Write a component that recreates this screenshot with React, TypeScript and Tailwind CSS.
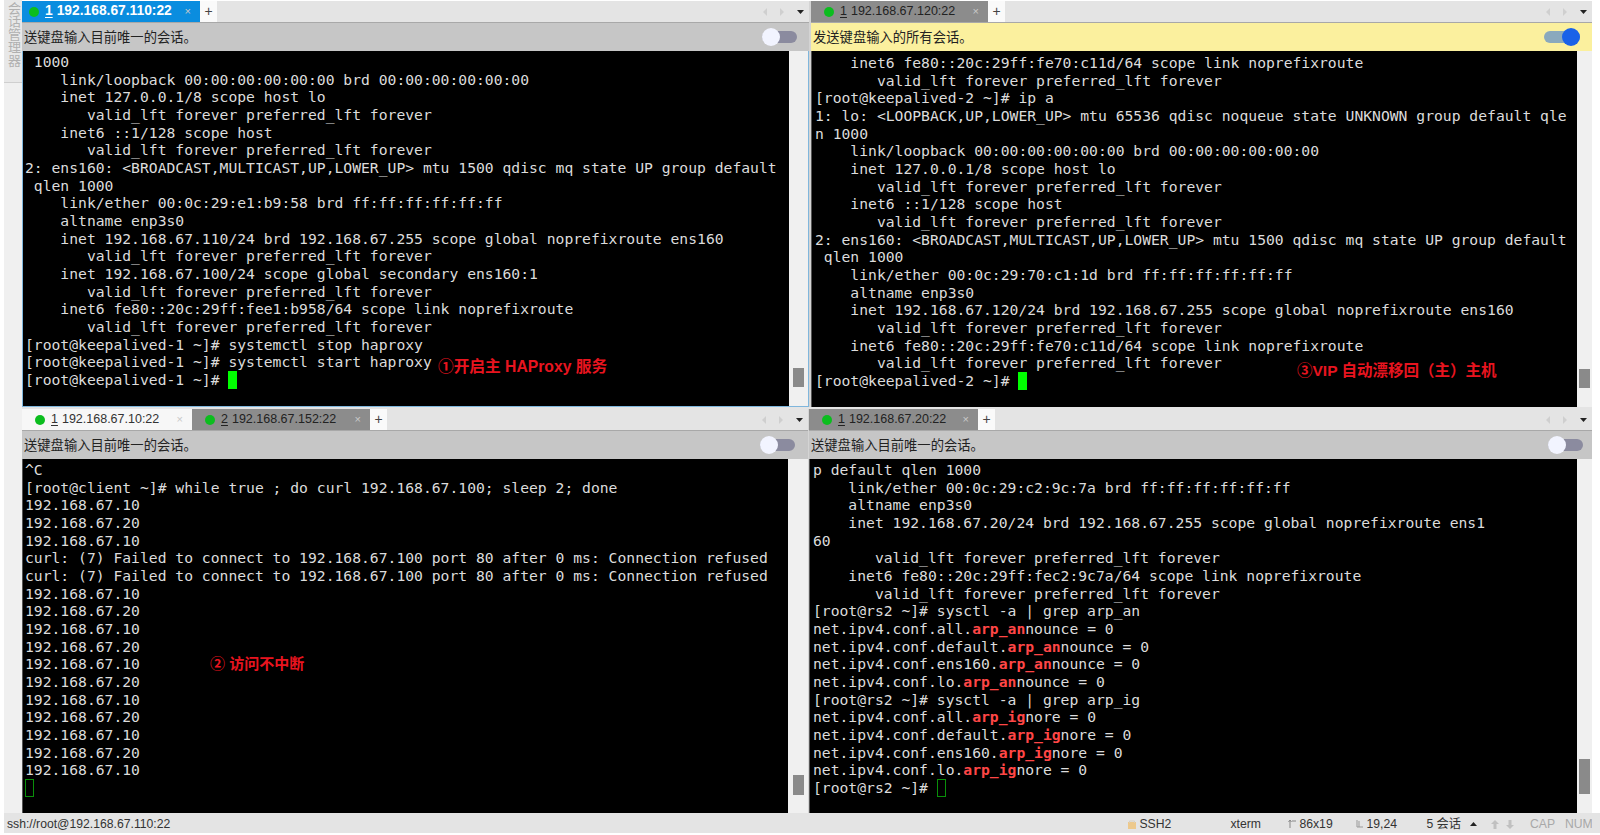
import React from "react";

const MONO = "[font-family:'DejaVu_Sans_Mono','Noto_Sans_CJK_SC',monospace]";
const SANS = "[font-family:'Liberation_Sans','Noto_Sans_CJK_SC',sans-serif]";

type Tab = { n?: string; host: string; kind: "blue" | "white" | "gray"; w: string };

function TabItem({ t }: { t: Tab }) {
  const bg =
    t.kind === "blue"
      ? "bg-[#0a8ddf] text-white font-bold text-[13.8px] pl-[7px]"
      : t.kind === "white"
        ? "bg-[#f7f7f7] text-[#333] text-[12.5px] pl-[13px]"
        : "bg-[#8c8c8c] text-[#222] text-[12.5px] pl-[13px]";
  const x = t.kind === "white" ? "text-[#c8c8c8]" : "text-[#c9c9c9]";
  return (
    <div className={`flex h-full shrink-0 items-center pr-[9px] ${bg} ${t.w}`}>
      <span className="h-[10px] w-[10px] shrink-0 rounded-full bg-[#0bbd1e]" />
      <span className="ml-[6px] underline underline-offset-2">{t.n ?? "1"}</span>
      <span className="ml-[4px]">{t.host}</span>
      <span className={`ml-auto text-[11px] font-normal ${x}`}>×</span>
    </div>
  );
}

function Toggle({ on }: { on?: boolean }) {
  return on ? (
    <div className="relative h-[12px] w-[36px] rounded-full bg-[#8aa9bd]">
      <div className="absolute right-0 top-[-3px] h-[18px] w-[18px] rounded-full bg-[#1a62e8]" />
    </div>
  ) : (
    <div className="relative h-[12px] w-[35px] rounded-full bg-[#8b8b9f]">
      <div className="absolute left-0 top-[-3px] h-[18px] w-[18px] rounded-full bg-[#f2f4ff]" />
    </div>
  );
}

function Line({ text }: { text: string }) {
  const parts = text.split(/(\{[^}]*\}|§|¤)/);
  return (
    <div className="h-[17.67px]">
      {parts.map((p, i) => {
        if (p === "§")
          return <span key={i} className="inline-block h-[18px] w-[9px] bg-[#00ff00] align-top" />;
        if (p === "¤")
          return (
            <span key={i} className="inline-block h-[18px] w-[9px] border border-[#0a8f0a] align-top" />
          );
        if (p.startsWith("{"))
          return (
            <span key={i} className="font-bold text-[#ff4646]">
              {p.slice(1, -1)}
            </span>
          );
        return <span key={i}>{p}</span>;
      })}
    </div>
  );
}

function Pane(props: {
  tabs: Tab[];
  notice: string;
  yellow?: boolean;
  on?: boolean;
  lines: string[];
  pad: string;
  noticePad: string;
  width: string;
  focused?: boolean;
  thumb: string;
  barW: string;
  children?: React.ReactNode;
}) {
  return (
    <div className={`relative flex h-full shrink-0 flex-col ${props.width}`}>
      <div className="flex h-[21px] shrink-0 items-center bg-[#e4e4e4]">
        {props.tabs.map((t) => (
          <TabItem key={t.host} t={t} />
        ))}
        <div className="flex h-full w-[17px] shrink-0 items-center justify-center bg-[#fafafa] text-[14px] text-[#444]">
          +
        </div>
        <div className="ml-auto flex items-center pr-[5px] text-[#c4c4c4]">
          <svg width="24" height="10" viewBox="0 0 24 10" className="mr-[11px]">
            <path d="M5 1 L1 5 L5 9 Z M18 1 L22 5 L18 9 Z" fill="#cfcfcf" />
          </svg>
          <svg width="7" height="4" viewBox="0 0 7 4">
            <path d="M0 0 H7 L3.5 4 Z" fill="#222" />
          </svg>
        </div>
      </div>
      <div
        className={`flex h-[29px] shrink-0 items-center justify-between border-t border-[#a8a8a8] pl-[2px] text-[13.3px] text-[#222] ${props.noticePad} ${props.yellow ? "bg-[#fbf09e]" : "bg-[#c6c6c6]"} ${SANS}`}
      >
        <span className="pt-[2px]">{props.notice}</span>
        <Toggle on={props.on} />
      </div>
      <div
        className={`flex min-h-0 flex-1 ${props.focused ? "border-x border-b border-[#7fb6dc]" : "border-l border-[#555]"}`}
      >
        <div
          className={`min-w-0 flex-1 overflow-hidden whitespace-pre bg-black text-[14.7px] leading-[17.67px] text-[#dcdcdc] ${props.pad} ${MONO}`}
        >
          {props.lines.map((l, i) => (
            <Line key={i} text={l} />
          ))}
        </div>
        <div className={`flex shrink-0 flex-col items-center justify-end bg-[#f0f0f0] ${props.barW}`}>
          <div className={`w-[11px] bg-[#8a8a8a] ${props.thumb}`} />
        </div>
      </div>
      {props.children}
    </div>
  );
}

const tl = [
  " 1000",
  "    link/loopback 00:00:00:00:00:00 brd 00:00:00:00:00:00",
  "    inet 127.0.0.1/8 scope host lo",
  "       valid_lft forever preferred_lft forever",
  "    inet6 ::1/128 scope host",
  "       valid_lft forever preferred_lft forever",
  "2: ens160: <BROADCAST,MULTICAST,UP,LOWER_UP> mtu 1500 qdisc mq state UP group default",
  " qlen 1000",
  "    link/ether 00:0c:29:e1:b9:58 brd ff:ff:ff:ff:ff:ff",
  "    altname enp3s0",
  "    inet 192.168.67.110/24 brd 192.168.67.255 scope global noprefixroute ens160",
  "       valid_lft forever preferred_lft forever",
  "    inet 192.168.67.100/24 scope global secondary ens160:1",
  "       valid_lft forever preferred_lft forever",
  "    inet6 fe80::20c:29ff:fee1:b958/64 scope link noprefixroute",
  "       valid_lft forever preferred_lft forever",
  "[root@keepalived-1 ~]# systemctl stop haproxy",
  "[root@keepalived-1 ~]# systemctl start haproxy",
  "[root@keepalived-1 ~]# §",
];

const tr = [
  "    inet6 fe80::20c:29ff:fe70:c11d/64 scope link noprefixroute",
  "       valid_lft forever preferred_lft forever",
  "[root@keepalived-2 ~]# ip a",
  "1: lo: <LOOPBACK,UP,LOWER_UP> mtu 65536 qdisc noqueue state UNKNOWN group default qle",
  "n 1000",
  "    link/loopback 00:00:00:00:00:00 brd 00:00:00:00:00:00",
  "    inet 127.0.0.1/8 scope host lo",
  "       valid_lft forever preferred_lft forever",
  "    inet6 ::1/128 scope host",
  "       valid_lft forever preferred_lft forever",
  "2: ens160: <BROADCAST,MULTICAST,UP,LOWER_UP> mtu 1500 qdisc mq state UP group default",
  " qlen 1000",
  "    link/ether 00:0c:29:70:c1:1d brd ff:ff:ff:ff:ff:ff",
  "    altname enp3s0",
  "    inet 192.168.67.120/24 brd 192.168.67.255 scope global noprefixroute ens160",
  "       valid_lft forever preferred_lft forever",
  "    inet6 fe80::20c:29ff:fe70:c11d/64 scope link noprefixroute",
  "       valid_lft forever preferred_lft forever",
  "[root@keepalived-2 ~]# §",
];

const bl = [
  "^C",
  "[root@client ~]# while true ; do curl 192.168.67.100; sleep 2; done",
  "192.168.67.10",
  "192.168.67.20",
  "192.168.67.10",
  "curl: (7) Failed to connect to 192.168.67.100 port 80 after 0 ms: Connection refused",
  "curl: (7) Failed to connect to 192.168.67.100 port 80 after 0 ms: Connection refused",
  "192.168.67.10",
  "192.168.67.20",
  "192.168.67.10",
  "192.168.67.20",
  "192.168.67.10",
  "192.168.67.20",
  "192.168.67.10",
  "192.168.67.20",
  "192.168.67.10",
  "192.168.67.20",
  "192.168.67.10",
  "¤",
];

const br = [
  "p default qlen 1000",
  "    link/ether 00:0c:29:c2:9c:7a brd ff:ff:ff:ff:ff:ff",
  "    altname enp3s0",
  "    inet 192.168.67.20/24 brd 192.168.67.255 scope global noprefixroute ens1",
  "60",
  "       valid_lft forever preferred_lft forever",
  "    inet6 fe80::20c:29ff:fec2:9c7a/64 scope link noprefixroute",
  "       valid_lft forever preferred_lft forever",
  "[root@rs2 ~]# sysctl -a | grep arp_an",
  "net.ipv4.conf.all.{arp_an}nounce = 0",
  "net.ipv4.conf.default.{arp_an}nounce = 0",
  "net.ipv4.conf.ens160.{arp_an}nounce = 0",
  "net.ipv4.conf.lo.{arp_an}nounce = 0",
  "[root@rs2 ~]# sysctl -a | grep arp_ig",
  "net.ipv4.conf.all.{arp_ig}nore = 0",
  "net.ipv4.conf.default.{arp_ig}nore = 0",
  "net.ipv4.conf.ens160.{arp_ig}nore = 0",
  "net.ipv4.conf.lo.{arp_ig}nore = 0",
  "[root@rs2 ~]# ¤",
];

const NOTE = `absolute whitespace-pre font-bold text-[#e8141f] leading-none ${SANS}`;

export default function App() {
  return (
    <div className={`flex h-[835px] w-[1600px] flex-col overflow-hidden bg-white ${SANS}`}>
      <div className="flex min-h-0 flex-1 pl-[4px]">
        <div className="flex w-[18px] shrink-0 flex-col bg-[#f0f0f0]">
          <div className="h-[83px] border-b border-[#cfcfcf] bg-[#e8e8e8] pt-[2px] text-[13px] leading-[18px] text-[#b0b0b0] [writing-mode:vertical-rl]">
            会话管理器
          </div>
        </div>
        <div className="flex min-w-0 flex-1 flex-col pr-[8px] pt-[1px]">
          <div className="flex h-[406px] shrink-0 gap-[2px] bg-[#d4d4d4]">
            <Pane
              width="w-[787px]"
              focused
              tabs={[{ host: "192.168.67.110:22", kind: "blue", w: "w-[178px]" }]}
              notice="送键盘输入目前唯一的会话。"
              noticePad="pr-[12px]"
              lines={tl}
              pad="pl-[2px] pt-[2px]"
              thumb="h-[19px] mb-[19px]"
              barW="w-[19px]"
            >
              <span className={`${NOTE} left-[416px] top-[358px] text-[15.7px]`}>①开启主 HAProxy 服务</span>
            </Pane>
            <Pane
              width="w-[781px]"
              yellow
              on
              tabs={[{ host: "192.168.67.120:22", kind: "gray", w: "w-[177px]" }]}
              notice="发送键盘输入的所有会话。"
              noticePad="pr-[12px]"
              lines={tr}
              pad="pl-[3px] pt-[3px]"
              thumb="h-[19px] mb-[19px]"
              barW="w-[15px]"
            >
              <span className={`${NOTE} left-[486px] top-[362px] text-[15.5px]`}>③VIP 自动漂移回（主）主机</span>
            </Pane>
          </div>
          <div className="h-[2px] shrink-0 bg-[#e4e4e4]" />
          <div className="flex min-h-0 flex-1 gap-[1px] bg-[#d4d4d4]">
            <Pane
              width="w-[786px]"
              tabs={[
                { host: "192.168.67.10:22", kind: "white", w: "w-[170px]" },
                { n: "2", host: "192.168.67.152:22", kind: "gray", w: "w-[178px]" },
              ]}
              notice="送键盘输入目前唯一的会话。"
              noticePad="pr-[13px]"
              lines={bl}
              pad="pl-[2px] pt-[2px]"
              thumb="h-[20px] mb-[18px]"
              barW="w-[20px]"
            >
              <span className={`${NOTE} left-[188px] top-[247px] text-[15px]`}>② 访问不中断</span>
            </Pane>
            <Pane
              width="w-[783px]"
              tabs={[{ host: "192.168.67.20:22", kind: "gray", w: "w-[169px]" }]}
              notice="送键盘输入目前唯一的会话。"
              noticePad="pr-[9px]"
              lines={br}
              pad="pl-[3px] pt-[2px]"
              thumb="h-[35px] mb-[19px]"
              barW="w-[15px]"
            />
          </div>
        </div>
      </div>
      <div className="relative mb-[2px] ml-[4px] flex h-[20px] shrink-0 items-center bg-[#e4e4e4] pl-[7px] pr-[8px] pt-[2px] text-[12.2px] text-[#333]">
        <span className="-ml-[4px]">ssh://root@192.168.67.110:22</span>
        <div className="ml-auto flex items-center">
          <svg width="8" height="9" viewBox="0 0 8 9" className="mr-[3px]">
            <rect x="0" y="2" width="8" height="7" fill="#edc98c" />
            <path d="M1.5 3 V1 H6.5 V3" fill="none" stroke="#d8d0c0" />
          </svg>
          <span className="w-[91px]">SSH2</span>
          <span className="w-[58px]">xterm</span>
          <svg width="8" height="10" viewBox="0 0 8 10" className="mr-[3px]">
            <path d="M2 1 V9 M0.5 3 L2 1 L3.5 3 M4 2 H8" fill="none" stroke="#888" />
          </svg>
          <span className="w-[56px]">86x19</span>
          <svg width="8" height="10" viewBox="0 0 8 10" className="mr-[3px]">
            <path d="M2 1 V8 H8 M4 2 V8" fill="none" stroke="#999" />
          </svg>
          <span className="w-[60px]">19,24</span>
          <span className="whitespace-pre">5 会话</span>
          <svg width="7" height="4" viewBox="0 0 7 4" className="ml-[9px] mr-[14px]">
            <path d="M0 4 H7 L3.5 0 Z" fill="#222" />
          </svg>
          <svg width="8" height="9" viewBox="0 0 8 9" className="mr-[7px]">
            <path d="M4 0 L8 4 H5.5 V9 H2.5 V4 H0 Z" fill="#c0c0c0" />
          </svg>
          <svg width="8" height="9" viewBox="0 0 8 9" className="mr-[16px]">
            <path d="M4 9 L8 5 H5.5 V0 H2.5 V5 H0 Z" fill="#c0c0c0" />
          </svg>
          <span className="w-[35px] text-[#a8a8a8]">CAP</span>
          <span className="w-[27px] overflow-hidden text-[#a8a8a8]">NUM</span>
        </div>
      </div>
    </div>
  );
}
